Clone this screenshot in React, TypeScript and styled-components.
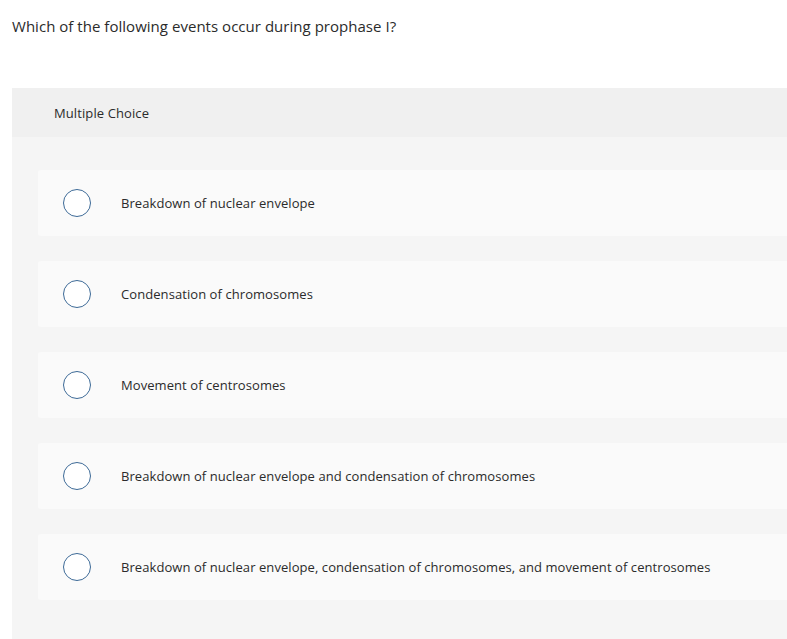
import React from 'react';
import styled, { createGlobalStyle } from 'styled-components';

const GlobalStyle = createGlobalStyle`
  html, body {
    margin: 0;
    padding: 0;
    background: #ffffff;
    overflow: hidden;
  }
  body {
    font-family: 'Open Sans', 'Lato', sans-serif;
    color: #2d2d2d;
  }
`;

const options = [
  'Breakdown of nuclear envelope',
  'Condensation of chromosomes',
  'Movement of centrosomes',
  'Breakdown of nuclear envelope and condensation of chromosomes',
  'Breakdown of nuclear envelope, condensation of chromosomes, and movement of centrosomes',
];

const App = () => {
  return (
    <>
      <GlobalStyle />
      <Page>
        <Question>Which of the following events occur during prophase I?</Question>
        <Panel>
          <PanelHeader>Multiple Choice</PanelHeader>
          <OptionList>
            {options.map((text) => (
              <OptionRow key={text}>
                <Radio aria-label={text} />
                <OptionText>{text}</OptionText>
              </OptionRow>
            ))}
          </OptionList>
        </Panel>
      </Page>
    </>
  );
};

export default App;

const Page = styled.div`
  padding: 16px 0 0 12px;
  min-height: 639px;
  box-sizing: border-box;
`;

const Question = styled.div`
  font-size: 15px;
  line-height: 20px;
  letter-spacing: 0.03px;
  color: #2b2b2b;
`;

const Panel = styled.div`
  margin-top: 52px;
  background: #f5f5f5;
  min-height: 560px;
`;

const PanelHeader = styled.div`
  height: 49px;
  display: flex;
  align-items: center;
  padding-left: 42px;
  background: #f0f0f0;
  font-size: 13px;
  letter-spacing: 0.1px;
  color: #2b2b2b;
`;

const OptionList = styled.div`
  display: flex;
  flex-direction: column;
  gap: 25px;
  padding: 33px 0 0 26px;
`;

const OptionRow = styled.div`
  height: 66px;
  display: flex;
  align-items: center;
  background: #fafafa;
  border-radius: 3px 0 0 3px;
  padding-left: 25px;
`;

const Radio = styled.button`
  width: 28px;
  height: 28px;
  border-radius: 50%;
  border: 1.5px solid #3d6a97;
  background: #ffffff;
  padding: 0;
  flex-shrink: 0;
  cursor: pointer;
`;

const OptionText = styled.span`
  margin-left: 30px;
  font-size: 13px;
  letter-spacing: 0.07px;
  color: #2b2b2b;
`;
